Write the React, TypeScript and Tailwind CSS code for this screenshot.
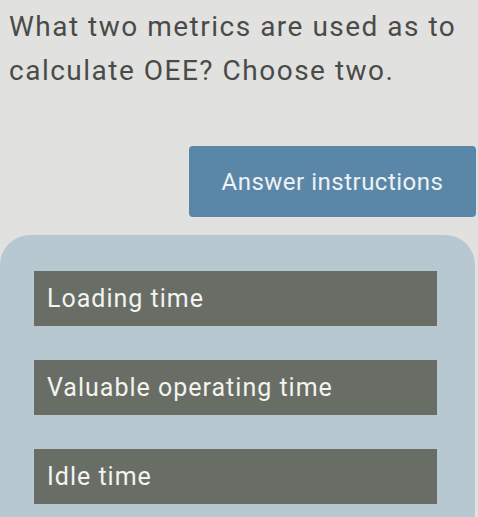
import React from 'react';

const options = ['Loading time', 'Valuable operating time', 'Idle time'];

export default function App() {
  return (
    <div
      className="h-[517px] w-[478px] overflow-hidden bg-[#e1e2e0] text-[#4a4b49]"
      style={{ fontFamily: 'Roboto, "Noto Sans", sans-serif' }}
    >
      {/* Question */}
      <h1 className="px-[9px] pt-[5px] text-[28px] font-normal leading-[44px] tracking-[1.5px]">
        What two metrics are used as to calculate OEE? Choose two.
      </h1>

      {/* Instructions button */}
      <div className="mt-[53px] flex justify-end pr-[2px]">
        <button className="flex h-[71px] w-[287px] items-center justify-center rounded-[4px] bg-[#5a87a7] text-[24px] tracking-[0.5px] text-[#eef2f4]">
          Answer instructions
        </button>
      </div>

      {/* Answer choices */}
      <div className="mt-[18px] mr-[3px] h-[300px] rounded-t-[30px] bg-[#b8c8d0] pt-[36px]">
        <div className="flex flex-col gap-[34px] pl-[34px] pr-[38px]">
          {options.map((option) => (
            <div
              key={option}
              className="flex h-[55px] items-center bg-[#686e66] px-[13px] text-[25px] tracking-[1px] text-[#f3f3ef]"
            >
              {option}
            </div>
          ))}
        </div>
      </div>
    </div>
  );
}
